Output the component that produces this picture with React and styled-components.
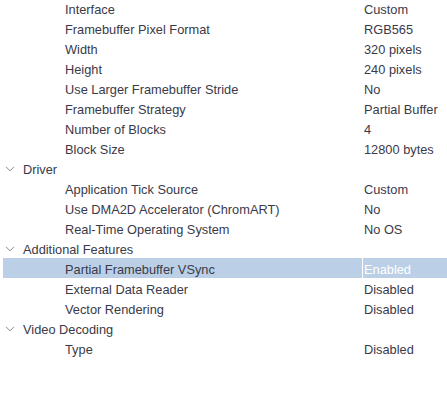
import React from "react";
import styled, { createGlobalStyle } from "styled-components";

const GlobalSC = createGlobalStyle`
  html, body {
    margin: 0;
    padding: 0;
    background: #fff;
  }
  body {
    font-family: "Liberation Sans", Arial, sans-serif;
    font-size: 12.8px;
    color: #3a3a48;
  }
`;

const TreeSC = styled.div`
  width: 447px;
  height: 395px;
  overflow: hidden;
  padding-left: 3px;
  box-sizing: border-box;
`;

const ListSC = styled.div`
  margin-top: -2px;
  display: flex;
  flex-direction: column;
`;

const RowSC = styled.div`
  display: grid;
  grid-template-columns: 359px 1fr;
  height: 20px;
  align-items: stretch;
  background: ${props => (props.selected ? "#bbd0e7" : "transparent")};
`;

const LabelSC = styled.div`
  display: flex;
  align-items: center;
  padding-top: 2px;
  padding-left: ${props => (props.group ? "2px" : "62px")};
  color: #3a3a48;
  white-space: nowrap;
`;

const ValueSC = styled.div`
  display: flex;
  align-items: center;
  padding-top: 2px;
  padding-left: 1px;
  white-space: nowrap;
  border-left: 1px solid ${props => (props.selected ? "#fff" : "transparent")};
  color: ${props => (props.selected ? "#fff" : "#3a3a48")};
`;

const ChevronSC = styled.svg`
  width: 10px;
  height: 6px;
  margin-right: 8px;
  flex-shrink: 0;
`;

const Chevron = () => (
  <ChevronSC viewBox="0 0 10 6">
    <path d="M1 0.8 L5 4.8 L9 0.8" fill="none" stroke="#8a8a8a" strokeWidth="1" />
  </ChevronSC>
);

const rows = [
  { label: "Interface", value: "Custom" },
  { label: "Framebuffer Pixel Format", value: "RGB565" },
  { label: "Width", value: "320 pixels" },
  { label: "Height", value: "240 pixels" },
  { label: "Use Larger Framebuffer Stride", value: "No" },
  { label: "Framebuffer Strategy", value: "Partial Buffer" },
  { label: "Number of Blocks", value: "4" },
  { label: "Block Size", value: "12800 bytes" },
  { label: "Driver", group: true },
  { label: "Application Tick Source", value: "Custom" },
  { label: "Use DMA2D Accelerator (ChromART)", value: "No" },
  { label: "Real-Time Operating System", value: "No OS" },
  { label: "Additional Features", group: true },
  { label: "Partial Framebuffer VSync", value: "Enabled", selected: true },
  { label: "External Data Reader", value: "Disabled" },
  { label: "Vector Rendering", value: "Disabled" },
  { label: "Video Decoding", group: true },
  { label: "Type", value: "Disabled" },
];

export default function App() {
  return (
    <>
      <GlobalSC />
      <TreeSC>
        <ListSC>
          {rows.map(r => (
            <RowSC key={r.label} selected={r.selected}>
              <LabelSC group={r.group}>
                {r.group && <Chevron />}
                {r.label}
              </LabelSC>
              <ValueSC selected={r.selected}>{r.value}</ValueSC>
            </RowSC>
          ))}
        </ListSC>
      </TreeSC>
    </>
  );
}
